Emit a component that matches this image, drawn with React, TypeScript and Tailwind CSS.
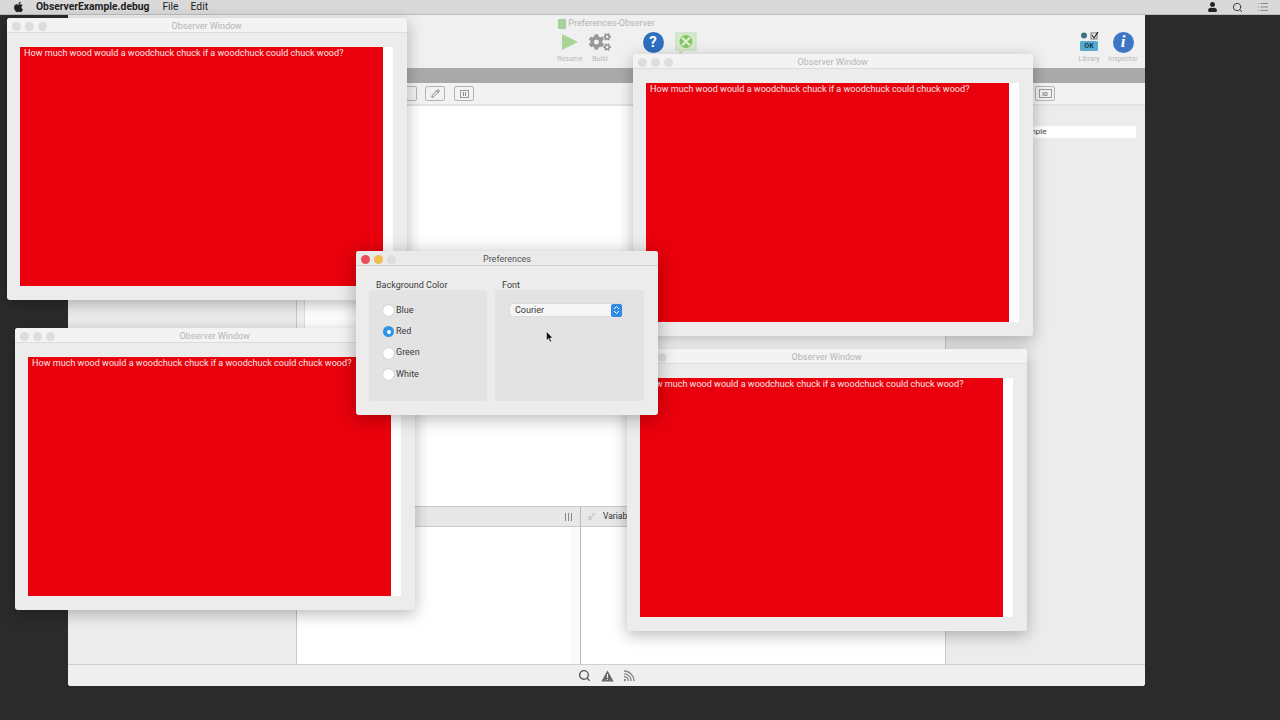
import { FaApple, FaCogs, FaUser } from "react-icons/fa"
import { Search, Pencil, List } from "lucide-react"

const ui = "font-['Roboto','Liberation_Sans',sans-serif]"

function Lights({ active = false }: { active?: boolean }) {
  return (
    <div className="absolute left-[5px] top-[4px] flex gap-[4px]">
      <span className={"h-[9px] w-[9px] rounded-full " + (active ? "bg-[#e8505b]" : "bg-[#dddddd]")} />
      <span className={"h-[9px] w-[9px] rounded-full " + (active ? "bg-[#f1bd4f]" : "bg-[#dddddd]")} />
      <span className="h-[9px] w-[9px] rounded-full bg-[#dddddd]" />
    </div>
  )
}

function ObserverWindow({ className }: { className: string }) {
  return (
    <div className={"absolute flex h-[281.5px] w-[399.5px] flex-col rounded-[3px] bg-[#ececec] shadow-[0_4px_16px_rgba(0,0,0,0.28)] " + className}>
      <div className="relative h-[15px] shrink-0 rounded-t-[3px] border-b border-[#dcdcdc] bg-[#f3f3f3] text-center text-[9px] leading-[17px] text-[#b5b5b5]">
        <Lights />
        Observer Window
      </div>
      <div className="flex pl-[13px] pt-[14px]">
        <div className="h-[239px] w-[362.5px] bg-[#e9000c] pl-[4px] text-[9.07px] leading-[12px] text-[#f8e6e6]">
          How much wood would a woodchuck chuck if a woodchuck could chuck wood?
        </div>
        <div className="h-[239px] w-[10.5px] bg-white" />
      </div>
    </div>
  )
}

function ToolButton({ label, width, children }: { label?: string; width: string; children: React.ReactNode }) {
  return (
    <div className={"flex shrink-0 flex-col items-center " + width}>
      <div className="flex h-[22px] items-center justify-center">{children}</div>
      {label && <span className="mt-[2px] text-[7px] leading-[9px] text-[#b8b8b8]">{label}</span>}
    </div>
  )
}

function Bars() {
  return (
    <svg width="7" height="8" viewBox="0 0 7 8" fill="#888">
      <rect x="0" y="0" width="1" height="8" />
      <rect x="3" y="0" width="1" height="8" />
      <rect x="6" y="0" width="1" height="8" />
    </svg>
  )
}

function Radio({ label, checked = false }: { label: string; checked?: boolean }) {
  return (
    <div className="flex h-[21.3px] items-center gap-[2px]">
      {checked ? (
        <span className="flex h-[11px] w-[11px] items-center justify-center rounded-full bg-[#2b96e6]">
          <span className="h-[4px] w-[4px] rounded-full bg-white" />
        </span>
      ) : (
        <span className="h-[11px] w-[11px] rounded-full bg-white shadow-[0_0_1px_rgba(0,0,0,0.35)]" />
      )}
      <span className="text-[9px] text-[#3a3a3a]">{label}</span>
    </div>
  )
}

function XcodeWindow() {
  return (
    <div className="absolute left-[68px] top-[15px] flex h-[671px] w-[1077px] flex-col overflow-hidden rounded-b-[3px] bg-[#ececec] text-[#555]">
      {/* toolbar */}
      <div className="h-[53px] shrink-0 bg-[#f0f0f0]">
        <div className="flex h-[15px] items-center justify-center gap-[2px] pt-[2px] text-[9px] text-[#b4b4b4]">
          <span className="h-[10px] w-[8px] rounded-[1px] bg-[#a5d29b]" />
          Preferences-Observer
        </div>
        <div className="mt-[1px] flex pl-[487px] pr-[5px]">
          <ToolButton label="Resume" width="w-[30px]">
            <svg width="18" height="18" viewBox="0 0 18 18"><path d="M1 1 L17 9 L1 17 Z" fill="#a9d696" /></svg>
          </ToolButton>
          <ToolButton label="Build" width="w-[30px]">
            <FaCogs className="h-[20px] w-[22px] text-[#989898]" />
          </ToolButton>
          <div className="w-[23px] shrink-0" />
          <ToolButton width="w-[30px]">
            <span className="flex h-[21px] w-[21px] items-center justify-center rounded-full bg-[#2f6fc0] text-[15px] font-bold text-white">?</span>
          </ToolButton>
          <ToolButton width="w-[35px]">
            <svg className="mt-[1px]" width="22" height="24" viewBox="0 0 22 24">
              <path d="M1 2 H21 V19 H9 L5 23 V19 H1 Z" fill="#d6ebcb" stroke="#bfdcb1" />
              <circle cx="11" cy="10.500" r="6.500" fill="#85c564" />
              <path d="M7 6.500 L15 14.500 M15 6.500 L7 14.500" stroke="#d9efcf" strokeWidth="2.200" />
            </svg>
          </ToolButton>
          <div className="flex-1" />
          <ToolButton label="Library" width="w-[34px]">
            <div className="relative h-[20px] w-[20px]">
              <svg width="20" height="20" viewBox="0 0 20 20">
                <circle cx="5" cy="3.500" r="3" fill="#3f6f86" />
                <rect x="12" y="1" width="6" height="6" fill="#f4f4f4" stroke="#777" />
                <path d="M13 3 L15 6 L19 0" fill="none" stroke="#222" strokeWidth="1.200" />
                <rect x="1" y="9" width="18" height="10" rx="1.500" fill="#57a9cf" />
              </svg>
              <span className="absolute left-0 top-[9px] w-[20px] text-center text-[7px] font-bold leading-[10px] text-[#123a52]">OK</span>
            </div>
          </ToolButton>
          <ToolButton label="Inspector" width="w-[34px]">
            <span className="flex h-[21px] w-[21px] items-center justify-center rounded-full bg-[#3d77c4] font-['Liberation_Serif',serif] text-[17px] font-bold italic text-white">i</span>
          </ToolButton>
        </div>
      </div>
      <div className="h-[15px] shrink-0 bg-[#a9a9a9]" />
      {/* tab row */}
      <div className="flex h-[23px] shrink-0 items-center border-b-2 border-[#e2e2e2] bg-[#f2f2f2] pl-[336px]">
        <span className="h-[15px] w-[13px] rounded-[2px] border border-[#b4b4b4]" />
        <span className="ml-[8px] flex h-[15px] w-[20px] items-center justify-center rounded-[2px] border border-[#b4b4b4]">
          <Pencil className="h-[9px] w-[9px] text-[#666]" />
        </span>
        <span className="ml-[9px] flex h-[15px] w-[20px] items-center justify-center rounded-[2px] border border-[#b4b4b4]">
          <span className="flex h-[8px] w-[9px] items-center justify-center gap-[1px] border border-[#999]">
            <span className="h-[4px] w-[1px] bg-[#888]" />
            <span className="h-[4px] w-[1px] bg-[#888]" />
          </span>
        </span>
        <span className="ml-[561px] flex h-[15px] w-[20px] items-center justify-center rounded-[2px] border border-[#b4b4b4]">
          <span className="h-[9px] w-[13px] border border-[#999] text-center text-[6px] font-bold leading-[7px] text-[#888]">ID</span>
        </span>
      </div>
      {/* body */}
      <div className="flex min-h-0 flex-1">
        <div className="w-[229px] shrink-0 border-r border-[#c8c8c8] bg-[#ededed]" />
        <div className="flex min-w-0 flex-1 flex-col bg-white">
          <div className="flex min-h-0 flex-1">
            <div className="w-[8px] shrink-0 border-r border-[#dddddd] bg-[#f1f1f1]" />
            <div className="flex-1" />
          </div>
          <div className="flex h-[21px] shrink-0 items-center border-y border-[#c9c9c9] bg-[#e8e8e8]">
            <div className="flex h-full w-[284px] shrink-0 items-center justify-end border-r border-[#b9b9b9] pr-[8px]">
              <Bars />
            </div>
            <span className="ml-[7px] font-['Liberation_Serif',serif] text-[9px] italic leading-[10px] text-[#aaa]">x<sup>y</sup></span>
            <span className="ml-[8px] text-[8.500px] text-[#333]">Variables</span>
          </div>
          <div className="flex h-[137px] shrink-0">
            <div className="w-[274px] shrink-0" />
            <div className="w-[10px] shrink-0 border-r border-[#b9b9b9] bg-[#fafafa]" />
          </div>
        </div>
        <div className="w-[200px] shrink-0 border-l border-[#c8c8c8] bg-[#ececec] pl-[8px] pr-[9px] pt-[20px]">
          <div className="h-[12px] bg-white pl-[30px] text-[8px] leading-[12px] text-[#444]">ObserverExample</div>
        </div>
      </div>
      {/* status bar */}
      <div className="flex h-[22px] shrink-0 items-center justify-center gap-[9px] border-t border-[#cfcfcf] bg-[#efefef]">
        <Search className="mr-[1px] h-[13px] w-[13px] text-[#555]" strokeWidth={2.500} />
        <svg width="13" height="12" viewBox="0 0 13 12">
          <path d="M6.500 0.500 L12.700 11.500 H0.300 Z" fill="#6a6a6a" />
          <rect x="6" y="4" width="1" height="4" fill="#efefef" />
          <rect x="6" y="9" width="1" height="1" fill="#efefef" />
        </svg>
        <svg width="12" height="12" viewBox="0 0 12 12" fill="none" stroke="#8a8a8a" strokeWidth="1.300">
          <circle cx="2" cy="10" r="1.200" fill="#8a8a8a" stroke="none" />
          <path d="M1 6.500 A4.500 4.500 0 0 1 5.500 11" />
          <path d="M1 3.800 A7.200 7.200 0 0 1 8.200 11" />
          <path d="M1 1 A10 10 0 0 1 11 11" />
        </svg>
      </div>
    </div>
  )
}

function PreferencesWindow() {
  return (
    <div className="absolute left-[356px] top-[251px] h-[164px] w-[302px] rounded-[3px] bg-[#ececec] shadow-[0_3px_18px_rgba(0,0,0,0.3)]">
      <div className="relative h-[15px] rounded-t-[3px] border-b border-[#d0d0d0] bg-[#eaeaea] text-center text-[9px] leading-[17px] text-[#555]">
        <Lights active />
        Preferences
      </div>
      <div className="flex gap-[8px] pl-[13px] pt-[13px]">
        <div className="w-[118px]">
          <div className="h-[11px] pl-[7px] text-[9px] leading-[13px] text-[#3a3a3a]">Background Color</div>
          <div className="h-[111px] rounded-[3px] bg-[#e3e3e3] pl-[14px] pt-[10px]">
            <Radio label="Blue" />
            <Radio label="Red" checked />
            <Radio label="Green" />
            <Radio label="White" />
          </div>
        </div>
        <div className="w-[149px]">
          <div className="h-[11px] pl-[7px] text-[9px] leading-[13px] text-[#3a3a3a]">Font</div>
          <div className="h-[111px] rounded-[3px] bg-[#e3e3e3] pl-[15px] pt-[14px]">
            <div className="flex h-[12px] w-[112px] items-center justify-between rounded-[2px] bg-[#f6f6f6] pl-[5px] text-[9px] text-[#3a3a3a] shadow-[0_0_1px_rgba(0,0,0,0.3)]">
              <span className="pt-[1px]">Courier</span>
              <span className="flex h-[13px] w-[11px] items-center justify-center rounded-[2px] bg-[#2f8be4]">
                <svg width="7" height="10" viewBox="0 0 7 10" fill="none" stroke="white" strokeWidth="1">
                  <path d="M1 4 L3.500 1.500 L6 4 M1 6 L3.500 8.500 L6 6" />
                </svg>
              </span>
            </div>
          </div>
        </div>
      </div>
    </div>
  )
}

export default function App() {
  return (
    <div className={"relative h-[720px] w-[1280px] overflow-hidden bg-[#2b2b2b] " + ui}>
      {/* menu bar */}
      <div className="flex h-[15px] items-center border-b border-[#bdbdbd] bg-[#d9d9d9] pl-[13px] pr-[11px] text-[10.300px] text-[#222]">
        <FaApple className="h-[12px] w-[11px] text-[#222]" />
        <span className="ml-[12px] font-bold">ObserverExample.debug</span>
        <span className="ml-[13px]">File</span>
        <span className="ml-[12px]">Edit</span>
        <div className="ml-auto flex items-center gap-[14px]">
          <FaUser className="h-[10px] w-[11px] text-[#222]" />
          <Search className="h-[11px] w-[11px] text-[#333]" />
          <List className="h-[12px] w-[12px] text-[#888]" />
        </div>
      </div>

      <XcodeWindow />

      <ObserverWindow className="left-[7px] top-[18px]" />
      <ObserverWindow className="left-[633px] top-[54px]" />
      <ObserverWindow className="left-[15px] top-[328px]" />
      <ObserverWindow className="left-[627px] top-[349px]" />

      <PreferencesWindow />

      {/* mouse pointer */}
      <svg className="absolute left-[546px] top-[331px]" width="7" height="12" viewBox="0 0 7 12">
        <path d="M0.500 0.500 V9.500 L2.500 7.500 L4 11 L5.500 10.300 L4 7 H6.800 Z" fill="#111" stroke="#fff" strokeWidth="0.500" />
      </svg>
    </div>
  )
}
